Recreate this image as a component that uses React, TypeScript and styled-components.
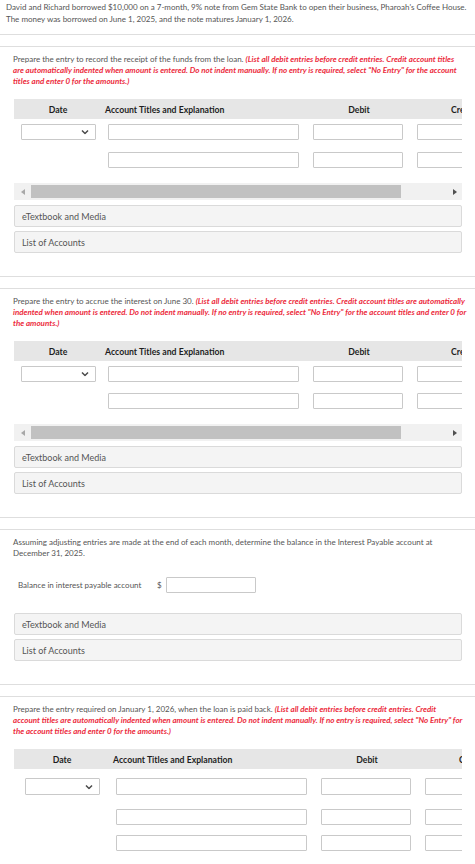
import React from "react";
import styled, {createGlobalStyle} from "styled-components";

const GlobalStyles = createGlobalStyle`
  html, body {
    margin: 0;
    padding: 0;
    background: #ffffff;
  }
  body {
    font-family: Lato, "Open Sans", sans-serif;
    color: #555555;
    width: 475px;
    overflow: hidden;
  }
`;

const Page = styled.div`
  width: 475px;
`;

const Intro = styled.div`
  padding: 1px 6px 9px 6px;
  font-size: 8px;
  line-height: 12px;
  white-space: nowrap;
  border-bottom: 1px solid #dedede;
  margin-bottom: 11px;
`;

const Section = styled.section<{ $last?: boolean }>`
  border-top: 1px solid #dedede;
  border-bottom: ${p => (p.$last ? "none" : "1px solid #dedede")};
  margin-bottom: 11px;
  padding: 7px 13px 23px 14px;
`;

const Prompt = styled.p`
  margin: 0 0 0 -1px;
  font-size: 8px;
  line-height: 11px;
  white-space: nowrap;
`;

const Hint = styled.em`
  color: #ec2b3d;
  font-weight: 700;
`;

const TableViewport = styled.div`
  margin-top: 12px;
  width: 448px;
  overflow: hidden;
`;

const Grid = styled.div<{ $dateWidth: number }>`
  display: grid;
  grid-template-columns: ${p => p.$dateWidth}px 205px 104px 104px;
  width: max-content;
`;

const HeadCell = styled.div<{ $align?: "left" | "center" }>`
  height: 20px;
  background: #e6e6e6;
  display: flex;
  align-items: center;
  justify-content: ${p => (p.$align === "left" ? "flex-start" : "center")};
  padding-left: ${p => (p.$align === "left" ? "3px" : "0")};
  font-size: 8.7px;
  font-weight: 700;
  color: #1e1e1e;
  white-space: nowrap;
`;

const Cell = styled.div<{ $top: number; $center?: boolean }>`
  margin-top: ${p => p.$top}px;
  padding: ${p => (p.$center ? "0" : "0 8px 0 6px")};
  display: flex;
  justify-content: ${p => (p.$center ? "center" : "flex-start")};
`;

const TextBox = styled.div<{ $w?: number; $h?: number }>`
  box-sizing: border-box;
  width: ${p => (p.$w ? `${p.$w}px` : "100%")};
  height: ${p => p.$h || 16}px;
  border: 1px solid #c9c9c9;
  border-radius: 1px;
  background: #ffffff;
`;

const Select = styled.div<{ $h?: number }>`
  box-sizing: border-box;
  position: relative;
  width: 75px;
  height: ${p => p.$h || 16}px;
  border: 1px solid #c9c9c9;
  border-radius: 1px;
  background: #ffffff;
  svg {
    position: absolute;
    right: 6px;
    top: 50%;
    transform: translateY(-50%);
  }
`;

const Scrollbar = styled.div`
  margin-top: 15px;
  width: 448px;
  height: 17px;
  background: #f1f1f1;
  display: flex;
  align-items: center;
`;

const ArrowSlot = styled.div`
  width: 17px;
  height: 17px;
  display: flex;
  align-items: center;
  justify-content: center;
`;

const Arrow = styled.span<{ $dir: "left" | "right"; $color: string }>`
  width: 0;
  height: 0;
  border-top: 3.5px solid transparent;
  border-bottom: 3.5px solid transparent;
  ${p => (p.$dir === "left"
    ? `border-right: 4px solid ${p.$color}; margin-left: 0px;`
    : `border-left: 4px solid ${p.$color}; margin-left: 2px;`)}
`;

const TrackArea = styled.div`
  flex: 1;
  height: 13px;
`;

const Thumb = styled.div`
  width: 370px;
  height: 13px;
  background: #c1c1c1;
`;

const Panel = styled.div<{ $top?: number }>`
  box-sizing: border-box;
  margin-top: ${p => (p.$top ?? 4)}px;
  width: 448px;
  height: 22px;
  background: #f4f4f4;
  border: 1px solid #dadada;
  border-radius: 2px;
  padding-left: 7px;
  display: flex;
  align-items: center;
  font-size: 9px;
  color: #555555;
`;

const BalanceRow = styled.div`
  margin-top: 18px;
  display: flex;
  align-items: center;
  padding-left: 4px;
  font-size: 8px;
  color: #555555;
`;

const BalanceLabel = styled.span`
  width: 139px;
`;

const Dollar = styled.span`
  width: 9px;
`;

function Chevron() {
  return (
    <svg width="8" height="5" viewBox="0 0 8 5">
      <polyline points="1,1 4,4 7,1" fill="none" stroke="#4a4a4a" strokeWidth="1.5"/>
    </svg>
  );
}

interface JournalProps {
  dateWidth: number;
  rows: { top: number; h?: number }[];
}

function Journal(props: JournalProps) {
  return (
    <TableViewport>
      <Grid $dateWidth={props.dateWidth}>
        <HeadCell>Date</HeadCell>
        <HeadCell $align="left">Account Titles and Explanation</HeadCell>
        <HeadCell>Debit</HeadCell>
        <HeadCell>Credit</HeadCell>
        {props.rows.map((row, i) => (
          <React.Fragment key={i}>
            <Cell $top={row.top} $center>
              {i === 0 ? <Select $h={row.h}><Chevron/></Select> : null}
            </Cell>
            <Cell $top={row.top}><TextBox $h={row.h}/></Cell>
            <Cell $top={row.top}><TextBox $h={row.h}/></Cell>
            <Cell $top={row.top}><TextBox $h={row.h}/></Cell>
          </React.Fragment>
        ))}
      </Grid>
    </TableViewport>
  );
}

function ScrollStrip() {
  return (
    <Scrollbar>
      <ArrowSlot><Arrow $dir="left" $color="#a8a8a8"/></ArrowSlot>
      <TrackArea><Thumb/></TrackArea>
      <ArrowSlot><Arrow $dir="right" $color="#505050"/></ArrowSlot>
    </Scrollbar>
  );
}

function Resources(props: { top?: number }) {
  return (
    <>
      <Panel $top={props.top ?? 5}>eTextbook and Media</Panel>
      <Panel>List of Accounts</Panel>
    </>
  );
}

export default function App() {
  return (
    <Page>
      <GlobalStyles/>
      <Intro>
        David and Richard borrowed $10,000 on a 7-month, 9% note from Gem State Bank to open their business, Pharoah's Coffee House.
        <br/>
        The money was borrowed on June 1, 2025, and the note matures January 1, 2026.
      </Intro>

      <Section>
        <Prompt>
          Prepare the entry to record the receipt of the funds from the loan.{" "}
          <Hint>
            (List all debit entries before credit entries. Credit account titles
            <br/>
            are automatically indented when amount is entered. Do not indent manually. If no entry is required, select "No Entry" for the account
            <br/>
            titles and enter 0 for the amounts.)
          </Hint>
        </Prompt>
        <Journal dateWidth={88} rows={[{top: 5}, {top: 12}]}/>
        <ScrollStrip/>
        <Resources/>
      </Section>

      <Section>
        <Prompt>
          Prepare the entry to accrue the interest on June 30.{" "}
          <Hint>
            (List all debit entries before credit entries. Credit account titles are automatically
            <br/>
            indented when amount is entered. Do not indent manually. If no entry is required, select "No Entry" for the account titles and enter 0 for
            <br/>
            the amounts.)
          </Hint>
        </Prompt>
        <Journal dateWidth={88} rows={[{top: 5}, {top: 11}]}/>
        <ScrollStrip/>
        <Resources/>
      </Section>

      <Section>
        <Prompt>
          Assuming adjusting entries are made at the end of each month, determine the balance in the Interest Payable account at
          <br/>
          December 31, 2025.
        </Prompt>
        <BalanceRow>
          <BalanceLabel>Balance in interest payable account</BalanceLabel>
          <Dollar>$</Dollar>
          <TextBox $w={90} $h={16}/>
        </BalanceRow>
        <Resources top={20}/>
      </Section>

      <Section $last>
        <Prompt>
          Prepare the entry required on January 1, 2026, when the loan is paid back.{" "}
          <Hint>
            (List all debit entries before credit entries. Credit
            <br/>
            account titles are automatically indented when amount is entered. Do not indent manually. If no entry is required, select "No Entry" for
            <br/>
            the account titles and enter 0 for the amounts.)
          </Hint>
        </Prompt>
        <Journal dateWidth={96} rows={[{top: 9, h: 17}, {top: 14}, {top: 10}]}/>
      </Section>
    </Page>
  );
}
